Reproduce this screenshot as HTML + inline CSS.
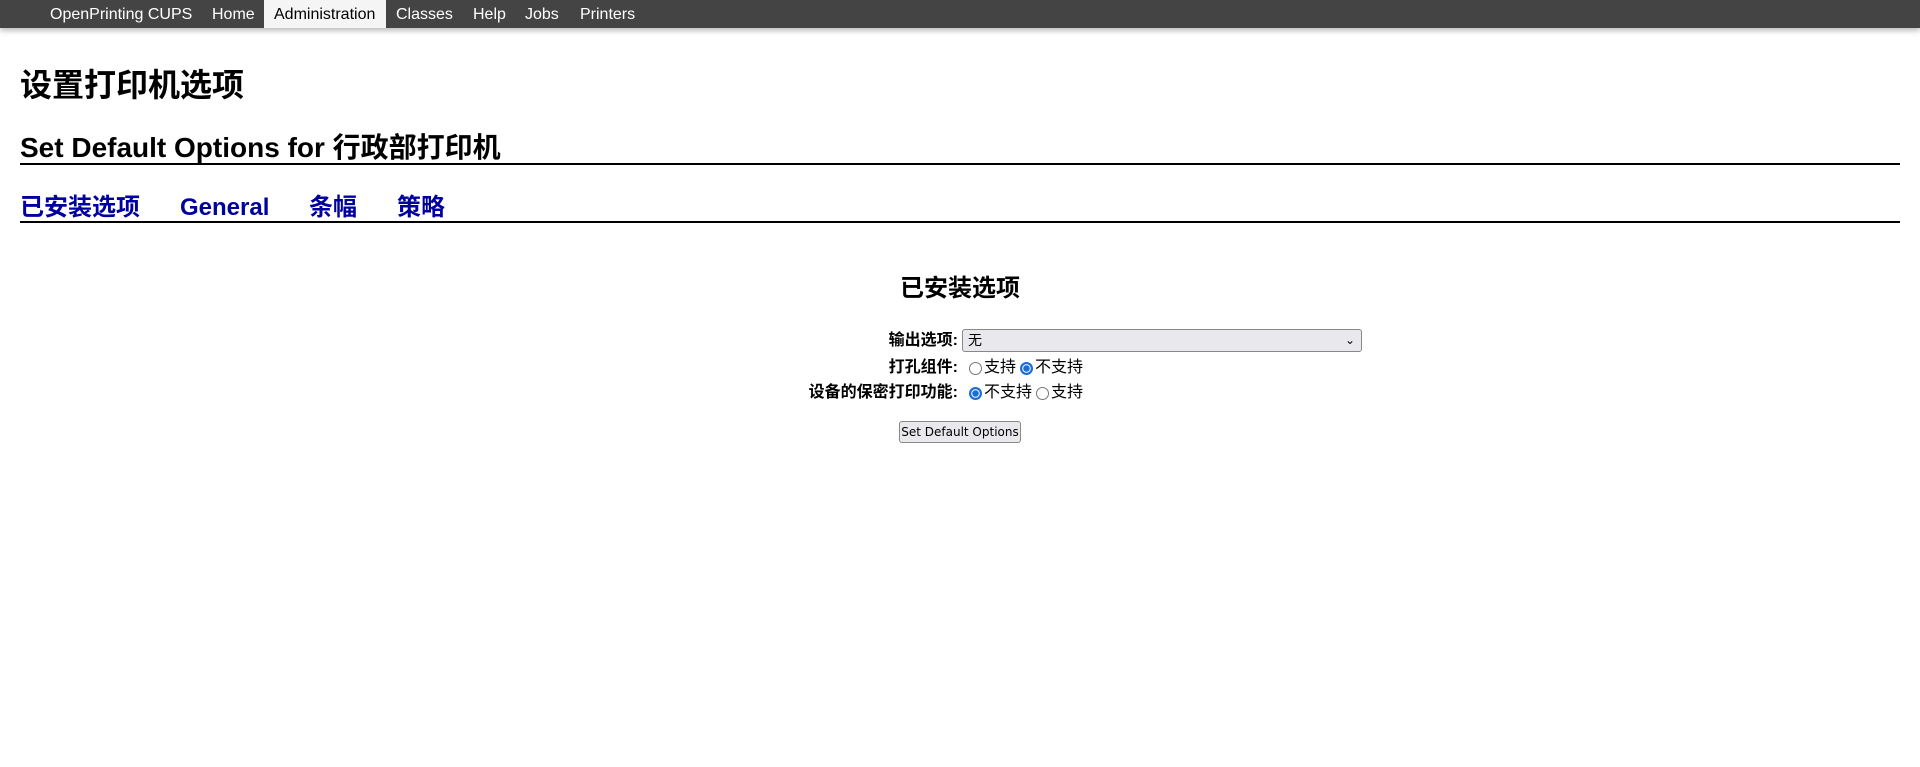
<!DOCTYPE html>
<html><head><meta charset="utf-8"><style>
body{margin:0;width:1920px;height:767px;background:#fff;font-family:"Liberation Sans","Noto Sans CJK SC",sans-serif;position:relative;overflow:hidden}
.nav{position:absolute;left:0;top:0;width:1920px;height:28px;background:#444;box-shadow:0 3px 5px rgba(0,0,0,.25)}
.nav a{position:absolute;top:0;height:28px;line-height:30px;color:#fff;font-size:16px;text-decoration:none}
.nav a.sel{background:#f5f5f5;color:#000;padding:0 10px}
.a{position:absolute;white-space:nowrap}
h1,h2,h3{margin:0;font-weight:bold}
.line{position:absolute;left:20px;width:1880px;height:2px;background:#000}
.tab{position:absolute;top:192px;font-size:24px;font-weight:bold;color:#0000a0;text-decoration:none;line-height:32px}
.lab{position:absolute;right:962px;font-size:16px;font-weight:bold;line-height:20px}
.opt{position:absolute;left:965px;font-size:16px;line-height:20px;display:flex;align-items:center}
.r{width:11px;height:11px;border:1px solid #777;border-radius:50%;display:inline-block;margin:0 2px 0 4px;box-sizing:content-box}
.r.on{border:1px solid #1a6ed8;background:radial-gradient(circle,#1a6ed8 0 3px,#fff 3.5px 4px,#1a6ed8 4.5px)}
</style></head><body>
<div class="nav">
<a style="left:50px">OpenPrinting CUPS</a>
<a style="left:212px">Home</a>
<a class="sel" style="left:264px;width:102px">Administration</a>
<a style="left:396px">Classes</a>
<a style="left:473px">Help</a>
<a style="left:525px">Jobs</a>
<a style="left:580px">Printers</a>
</div>
<h1 class="a" style="left:20px;top:65px;font-size:32px;line-height:40px">设置打印机选项</h1>
<h2 class="a" style="left:20px;top:131px;font-size:28px;line-height:34px">Set Default Options for 行政部打印机</h2>
<div class="line" style="top:163px"></div>
<a class="tab" style="left:20px">已安装选项</a>
<a class="tab" style="left:180px">General</a>
<a class="tab" style="left:309px">条幅</a>
<a class="tab" style="left:397px">策略</a>
<div class="line" style="top:221px"></div>
<h3 class="a" style="left:0;width:1920px;text-align:center;top:273px;font-size:24px;line-height:32px">已安装选项</h3>
<div class="lab" style="top:331px">输出选项:</div>
<div class="a" style="left:962px;top:329px;height:21px;border:1px solid #888;border-radius:3px;background:#e9e9ed;font-size:14px;line-height:21px;padding-left:5px;box-sizing:content-box;width:393px">无<span style="position:absolute;right:6px;top:0;font-size:12px">&#8964;</span></div>
<div class="lab" style="top:358px">打孔组件:</div>
<div class="opt" style="top:358px"><span class="r"></span>支持<span class="r on"></span>不支持</div>
<div class="lab" style="top:383px">设备的保密打印功能:</div>
<div class="opt" style="top:383px"><span class="r on"></span>不支持<span class="r"></span>支持</div>
<div class="a" style="left:899px;top:421px;width:120px;height:20px;border:1px solid #888;border-radius:3px;background:#e9e9ed;font-family:'DejaVu Sans',sans-serif;font-size:12px;line-height:21px;text-align:center">Set Default Options</div>
</body></html>
